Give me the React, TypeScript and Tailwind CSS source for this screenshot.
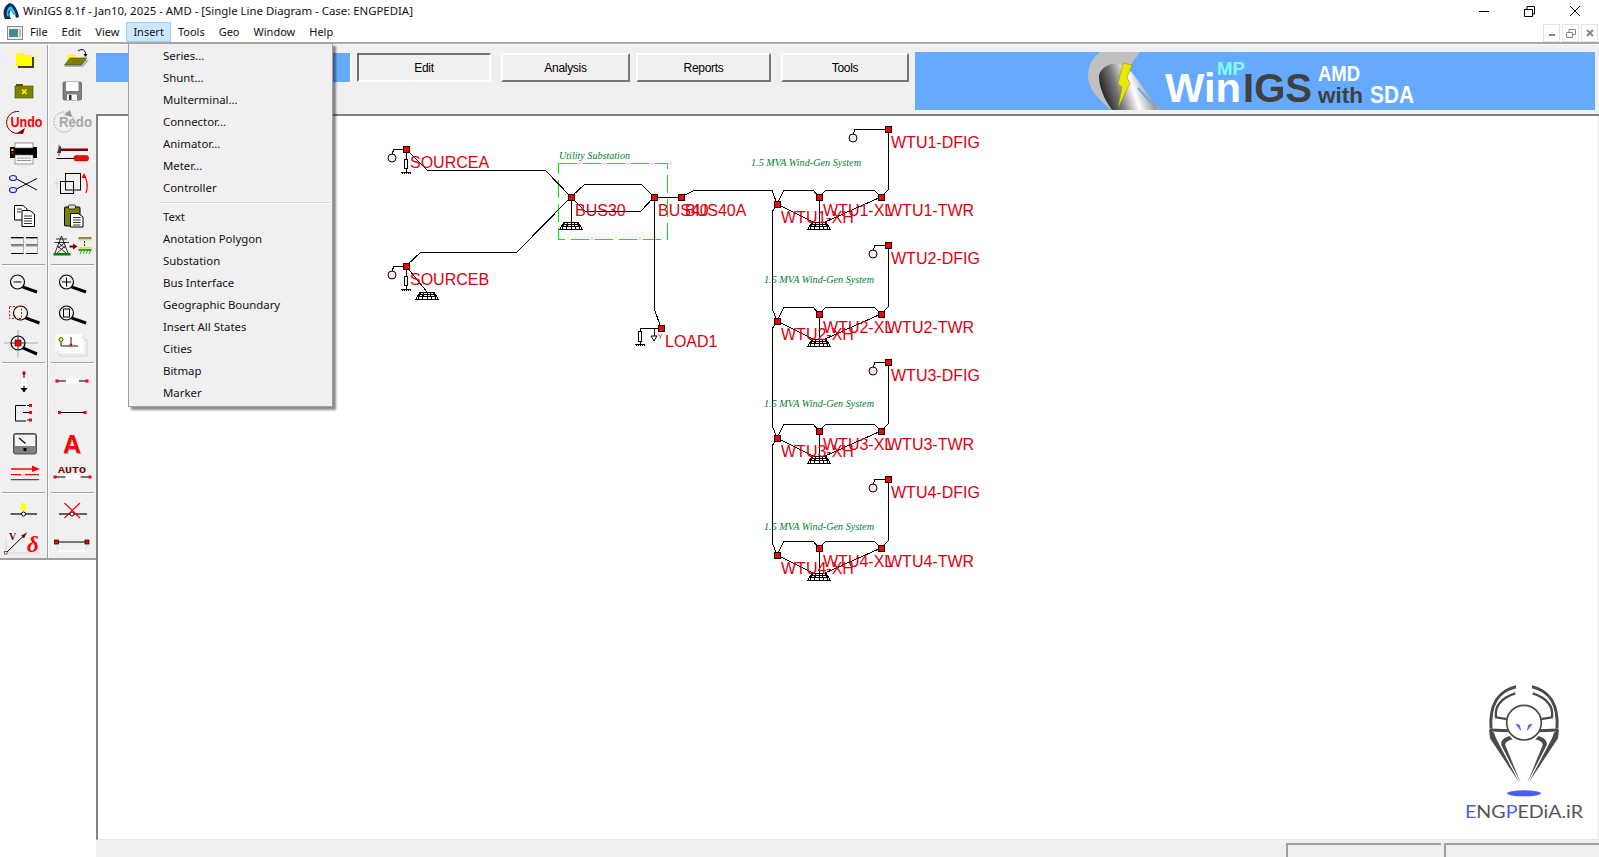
import React from "react";

const SANS = "font-['Noto_Sans',sans-serif]";

const menus = ["File", "Edit", "View", "Insert", "Tools", "Geo", "Window", "Help"];
const insert1 = ["Series...", "Shunt...", "Multerminal...", "Connector...", "Animator...", "Meter...", "Controller"];
const insert2 = ["Text", "Anotation Polygon", "Substation", "Bus Interface", "Geographic Boundary", "Insert All States", "Cities", "Bitmap", "Marker"];

const I = ({ children }: { children: React.ReactNode }) => (
  <svg width="44" height="31" viewBox="0 0 44 31" className="block">{children}</svg>
);

const Mag = ({ cx = 15.5, cy = 15, r = 7, ex = 35, ey = 25, children }: any) => (
  <>
    <line x1={cx + r * 0.7} y1={cy + r * 0.7} x2={ex} y2={ey} stroke="#000" strokeWidth="3" />
    <circle cx={cx} cy={cy} r={r} fill="#f4f4f4" stroke="#000" strokeWidth="1.2" />
    {children}
  </>
);

const Dot = ({ x, y, s = 3 }: any) => <rect x={x - s / 2} y={y - s / 2} width={s} height={s} fill="#f00" />;

const col1: React.ReactNode[][] = [
  [
    <I key="a">
      <g stroke="#ffff50" strokeWidth="1.1"><path d="M7 5 14 10M37 5 31 10M22 3V8M6 14.5H13M31 14.5H38M22 22V27M8 24 14 20M36 24 30 20" /></g>
      <rect x="16" y="12" width="16" height="11" fill="#404020" />
      <rect x="14" y="10" width="16" height="11" fill="#ffff00" />
      <rect x="15" y="8" width="7" height="2" fill="#ffff00" />
    </I>,
    <I key="b">
      <rect x="13" y="10" width="18" height="12" fill="#808000" stroke="#404000" strokeWidth=".6" />
      <rect x="14" y="8" width="7" height="2" fill="#555500" />
      <path d="M20 13.5 24.5 18M24.5 13.5 20 18" stroke="#ffff00" strokeWidth="1.6" />
    </I>,
    <I key="c">
      <path d="M17 4.5A11 11 0 1 0 21 25" fill="none" stroke="#800000" strokeWidth="1" />
      <path d="M15 26 23 21 21 27Z" fill="#800000" />
      <text x="8.5" y="19.5" textLength="32" lengthAdjust="spacingAndGlyphs" fontFamily="Liberation Sans" fontWeight="700" fontSize="14" fill="#f00">Undo</text>
    </I>,
    <I key="d">
      <rect x="8" y="9" width="27" height="11" fill="#000" />
      <rect x="13" y="5" width="18" height="5" fill="#fff" stroke="#666" strokeWidth=".7" />
      <rect x="9.5" y="11" width="2" height="2" fill="#ff0" />
      <rect x="9.5" y="14" width="2" height="2" fill="#f00" />
      <rect x="13" y="17" width="18" height="9" fill="#fff" stroke="#777" strokeWidth=".7" />
      <path d="M15 20H29M15 22.500H29" stroke="#777" strokeWidth=".8" />
    </I>,
    <I key="e">
      <ellipse cx="11" cy="9" rx="3.500" ry="2.500" fill="none" stroke="#1020e0" strokeWidth="1.200" />
      <ellipse cx="11" cy="21" rx="3.500" ry="2.500" fill="none" stroke="#1020e0" strokeWidth="1.200" />
      <path d="M14.500 10 35 21M14.500 20 35 9.500" stroke="#000" strokeWidth="1" />
    </I>,
    <I key="f">
      <path d="M12.500 5.500H21L25 9V20H12.500Z" fill="#fff" stroke="#000" strokeWidth="1" />
      <path d="M20 10.500H28L32.500 14V26.500H20Z" fill="#fff" stroke="#000" strokeWidth="1" />
      <path d="M22 16H30M22 18.500H30M22 21H30M22 23.500H30M15 9H20M15 12H19" stroke="#000" strokeWidth=".8" />
    </I>,
    <I key="g">
      <path d="M9 6.500H21.500M24 6.500H35.500M9 14H21.500M24 14H35.500M9 22.500H21.500M24 22.500H35.500" stroke="#000" strokeWidth="1" />
      <path d="M9 7.500H21.500M24 7.500H35.500M9 15H21.500M24 15H35.500" stroke="#999" strokeWidth="1" />
      <path d="M21.500 7V22M35.500 7V22" stroke="#888" strokeWidth=".6" />
    </I>,
  ],
  [
    <I key="a">
      <Mag><path d="M11.500 15H19.500" stroke="#000" strokeWidth="1" /></Mag>
    </I>,
    <I key="b">
      <Mag cx={18.500} cy={15} r={7} ex={37.500} ey={25} />
      <rect x="7.500" y="8.500" width="12" height="12" fill="none" stroke="#f00" strokeDasharray="2 1.500" strokeWidth="1" />
    </I>,
    <I key="c">
      <path d="M2 14H36M16 1V28" stroke="#999" strokeWidth=".8" />
      <Mag cx={16} cy={14} r={7} ex={35} ey={25}>
        <path d="M16 7V21M9 14H23" stroke="#000" strokeWidth=".8" />
        <rect x="13" y="11" width="6" height="6" fill="#f00" stroke="#000" strokeWidth=".5" />
      </Mag>
    </I>,
  ],
  [
    <I key="a">
      <Dot x={22} y={7} />
      <path d="M22 7V26" stroke="#000" strokeWidth="1" />
      <rect x="19.500" y="12" width="5" height="8" fill="#fff" />
      <path d="M18.500 22H25.500L22 26.500Z" fill="#000" />
    </I>,
    <I key="b">
      <path d="M13.500 8.500H24M13.500 8.500V24H24M21 15.500H27M25 8.500H27M25 23H27" stroke="#000" strokeWidth="1" fill="none" />
      <Dot x={28.500} y={8.500} /><Dot x={28.500} y={15.500} /><Dot x={28.500} y={23} />
    </I>,
    <I key="c">
      <rect x="11.500" y="5.500" width="23" height="20.500" rx="2" fill="#808080" stroke="#333" strokeWidth=".8" />
      <rect x="13" y="7" width="20" height="11" fill="#f4f4f4" />
      <path d="M17 10 23.500 15.500" stroke="#000" strokeWidth="1.100" />
      <rect x="21.500" y="20" width="3" height="3" fill="#000" />
    </I>,
    <I key="d">
      <path d="M9 10H35" stroke="#f00" strokeWidth="1.500" />
      <path d="M30 6.500 38 10 30 13Z" fill="#f00" />
      <path d="M9 15.500H19M23 15.500H37" stroke="#f00" strokeWidth="1" />
      <path d="M9 20.500H37" stroke="#f00" strokeWidth="1" />
      <path d="M9 16.500H37M9 21.500H37" stroke="#bbb" strokeWidth=".8" />
    </I>,
  ],
  [
    <I key="a">
      <path d="M19.500 7H23.500V11H26L21.500 15.500 17 11H19.500Z" fill="#ff0" />
      <path d="M8.500 18H35" stroke="#000" strokeWidth="1.200" />
      <circle cx="21.500" cy="18" r="2" fill="#fff" stroke="#000" strokeWidth="1" />
    </I>,
    <I key="b">
      <path d="M4 26 24.500 6" stroke="#000" strokeWidth="1" />
      <path d="M24.500 6 19 8.500 22 11.500Z" fill="#800000" />
      <path d="M4 26H38M4 26 V12" stroke="#ccc" strokeWidth=".7" fill="none" />
      <rect x="2.500" y="24.500" width="2.500" height="2.500" fill="#fff" stroke="#600" strokeWidth=".6" />
      <text x="7" y="13" fontFamily="Liberation Serif" fontSize="10" fontWeight="700" fill="#600">V</text>
      <text x="25" y="25" fontFamily="Liberation Serif" fontSize="23" fontStyle="italic" fontWeight="700" fill="#f00">δ</text>
    </I>,
  ],
];

const col2: React.ReactNode[][] = [
  [
    <I key="a">
      <path d="M16 10H25V12H33V16H16Z" fill="#ffff00" />
      <path d="M18 15H38L32 22H13Z" fill="#000" opacity=".25" />
      <path d="M19 13H36L30 20H13.500Z" fill="#808000" stroke="#333" strokeWidth=".5" />
      <path d="M27 6C31 3 35 5 34.500 10" fill="none" stroke="#000" strokeWidth="1" />
      <path d="M32.500 9 36.500 9 34.500 12Z" fill="#000" />
    </I>,
    <I key="b">
      <rect x="12" y="6" width="18.500" height="18" rx="1.500" fill="#808080" stroke="#444" strokeWidth=".6" />
      <rect x="15" y="6" width="12.500" height="9" fill="#fff" />
      <rect x="16" y="18.500" width="10" height="5.500" fill="#fff" />
      <rect x="18" y="19" width="2.500" height="5" fill="#333" />
    </I>,
    <I key="c">
      <circle cx="13" cy="15" r="10" fill="none" stroke="#aaa" strokeWidth="1" strokeDasharray="2 1" />
      <path d="M13 8 19 3 21 10Z" fill="#999" />
      <text x="8" y="20" textLength="33" lengthAdjust="spacingAndGlyphs" fontFamily="Liberation Sans" fontWeight="700" fontSize="14" fill="#a8a8a8">Redo</text>
    </I>,
    <I key="d">
      <rect x="8" y="10.500" width="29" height="2.500" fill="#800000" />
      <path d="M8 9 6 15H10V8Z" fill="#333" />
      <path d="M8 7V18" stroke="#555" strokeWidth="1" />
      <path d="M5.500 20.500H24" stroke="#000" strokeWidth="1" />
      <rect x="23" y="17.500" width="14.500" height="5.500" rx="2" fill="#e01010" stroke="#900" strokeWidth=".5" />
    </I>,
    <I key="e">
      <rect x="14.500" y="4.500" width="15" height="16.500" fill="none" stroke="#000" strokeWidth="1" />
      <rect x="9.500" y="12.500" width="13" height="12" fill="none" stroke="#000" strokeWidth="1" />
      <path d="M33 6C37 12 37 18 35 24" fill="none" stroke="#f00" strokeWidth="1.200" />
      <path d="M33 4 30.500 9H35.500Z" fill="#f00" />
      <path d="M6 8V21M3 14H9" stroke="#ccc" strokeWidth=".7" />
    </I>,
    <I key="f">
      <rect x="13.500" y="7" width="15.500" height="19" rx="1" fill="#808000" stroke="#000" strokeWidth="1" />
      <rect x="17.500" y="5" width="7" height="4" rx="1" fill="#ddd" stroke="#000" strokeWidth=".7" />
      <path d="M19.500 13.500H27.500L32 17V27H19.500Z" fill="#fff" stroke="#000" strokeWidth="1" />
      <path d="M22 17.500H29.500M22 20H29.500M22 22.500H29.500M22 25H29.500" stroke="#000" strokeWidth=".8" />
    </I>,
    <I key="g">
      <path d="M5 8H16M3.500 11.500H18M10.500 5 4 22M10.500 5 17 22M6.500 15 15 22M14.500 15 6 22M7 11.500 14 17M14 11.500 7 17" stroke="#000" strokeWidth=".8" fill="none" />
      <rect x="2.500" y="22" width="17" height="2.500" fill="#008000" />
      <path d="M18.500 15.500H23" stroke="#800000" strokeWidth="2" />
      <path d="M22 12.500 26.500 15.500 22 18.500Z" fill="#800000" />
      <path d="M27.500 7H40.500" stroke="#000" strokeWidth="1" />
      <path d="M27.500 8.500H40.500M27.500 17H40.500" stroke="#e0e000" strokeWidth="1.500" />
      <path d="M33.500 10V12M33.500 13V15" stroke="#000" strokeWidth=".8" />
      <path d="M27.500 19H40.500" stroke="#008000" strokeWidth="1.500" />
      <path d="M29 23 30.500 20M32 23 33.500 20M35 23 36.500 20M38 23 39.500 20" stroke="#008000" strokeWidth=".8" />
    </I>,
  ],
  [
    <I key="a">
      <Mag><path d="M11 15H20M15.500 10.500V19.500" stroke="#000" strokeWidth="1" /></Mag>
    </I>,
    <I key="b">
      <Mag><rect x="12.500" y="11" width="6" height="8" fill="none" stroke="#000" strokeWidth="1" /></Mag>
    </I>,
    <I key="c">
      <rect x="9" y="11" width="27" height="16" fill="#f8f8f8" stroke="#bbb" strokeWidth=".6" />
      <rect x="7" y="9" width="27" height="16" fill="#fbfbfb" stroke="#ccc" strokeWidth=".6" />
      <rect x="4.500" y="5" width="26" height="16" fill="#fff" />
      <circle cx="10" cy="10.500" r="2" fill="#ff0" stroke="#000" strokeWidth=".7" />
      <path d="M10 13V17H27M20 8V15" stroke="#000" strokeWidth=".9" fill="none" />
      <Dot x={20} y={16} s={2.500} />
    </I>,
  ],
  [
    <I key="a">
      <path d="M6 15H36" stroke="#000" strokeWidth="1" />
      <rect x="15" y="12.500" width="13" height="5" fill="#fff" />
      <Dot x={6} y={15} /><Dot x={36} y={15} />
    </I>,
    <I key="b">
      <path d="M8.500 15.500H34" stroke="#000" strokeWidth="1" />
      <Dot x={8.500} y={15.500} /><Dot x={34} y={15.500} />
    </I>,
    <I key="c">
      <text x="12.500" y="26" fontFamily="Liberation Sans" fontWeight="700" fontSize="25" fill="#999">A</text>
      <text x="12" y="25" fontFamily="Liberation Sans" fontWeight="700" fontSize="25" fill="#f00">A</text>
    </I>,
    <I key="d">
      <text x="7" y="13.500" textLength="28" lengthAdjust="spacingAndGlyphs" fontFamily="Liberation Mono" fontWeight="700" fontSize="9" fill="#800000">AUTO</text>
      <path d="M4 18H39" stroke="#000" strokeWidth="1" />
      <rect x="14.500" y="15.500" width="15" height="5" fill="#fff" />
      <Dot x={4} y={18} /><Dot x={39} y={18} />
    </I>,
  ],
  [
    <I key="a">
      <path d="M8 18H36" stroke="#000" strokeWidth="1.200" />
      <circle cx="21" cy="18" r="2" fill="#fff" stroke="#000" strokeWidth="1" />
      <path d="M13.500 7 29 22M29 7 13.500 22" stroke="#f00" strokeWidth="1.200" />
    </I>,
    <I key="b">
      <path d="M5.500 15H36" stroke="#000" strokeWidth="1" />
      <rect x="3.500" y="13" width="4" height="4" fill="#f00" stroke="#000" strokeWidth=".7" />
      <rect x="34" y="13" width="4" height="4" fill="#f00" stroke="#000" strokeWidth=".7" />
      <path d="M8 24H34M8 24 11 22M8 24 11 26M34 24 31 22M34 24 31 26" stroke="#fff" strokeWidth="1" />
      <path d="M5 18 8 23M37 18 34 23" stroke="#ccc" strokeWidth=".6" />
    </I>,
  ],
];

const Row = ({ a, b }: { a: React.ReactNode; b: React.ReactNode }) => (
  <div className="flex h-[31px]">
    <div className="flex w-[47px] items-center justify-center">{a}</div>
    <div className="w-[2px] bg-[#a0a0a0] border-r border-white" />
    <div className="flex w-[47px] items-center justify-center">{b}</div>
  </div>
);

const Divider = ({ h }: { h: string }) => (
  <div className={`flex ${h} items-center`}>
    <div className="flex w-[47px] items-center justify-center self-stretch">
      <div className="h-[2px] w-[43px] border-b border-white bg-[#a0a0a0]" />
    </div>
    <div className="w-[2px] self-stretch bg-[#a0a0a0] border-r border-white" />
    <div className="flex w-[47px] items-center justify-center self-stretch">
      <div className="h-[2px] w-[43px] border-b border-white bg-[#a0a0a0]" />
    </div>
  </div>
);

const Toolbar = () => (
  <div className="w-[96px] bg-white">
    <div className="border-b-2 border-[#a0a0a0] bg-[#f0f0f0]">
      {col1.map((g, gi) => (
        <React.Fragment key={gi}>
          {g.map((n, i) => <Row key={i} a={n} b={col2[gi][i]} />)}
          {gi < 3 && <Divider h={gi === 0 ? "h-[5px]" : "h-[6px]"} />}
        </React.Fragment>
      ))}
    </div>
  </div>
);

const ToolBtn = ({ label, w, sunken }: { label: string; w: string; sunken?: boolean }) => (
  <div
    className={`flex h-[29px] items-center justify-center text-[12px] tracking-[-0.3px] text-black font-['Liberation_Sans',sans-serif] ${w} ${
      sunken
        ? "border-[2px] border-t-[#6e6e6e] border-l-[#6e6e6e] border-r-white border-b-white"
        : "border-[2px] border-t-white border-l-white border-r-[#777777] border-b-[#777777]"
    }`}
  >
    {label}
  </div>
);

const Banner = () => (
  <svg width="680" height="58" viewBox="915 52 680 58" className="block bg-[#66aaff]">
    <defs>
      <linearGradient id="cyl" gradientUnits="userSpaceOnUse" x1="1097" y1="92" x2="1158" y2="72">
        <stop offset="0" stopColor="#0c0c0c" />
        <stop offset="0.3" stopColor="#777" />
        <stop offset="0.55" stopColor="#fff" />
        <stop offset="0.78" stopColor="#999" />
        <stop offset="1" stopColor="#eee" />
      </linearGradient>
    </defs>
    <path d="M1140 52C1130 66 1125 72 1124 80L1112 110C1098 100 1088 88 1088 76C1088 66 1092 58 1100 52Z" fill="#c0c0c0" />
    <path d="M1099 78C1098 70 1108 62 1118 64C1124 65 1129 69 1133 74L1160 110H1112C1105 100 1100 90 1099 78Z" fill="url(#cyl)" />
    <path d="M1138 88 1150 102H1160" fill="none" stroke="#66aaff" strokeWidth="2" />
    <path d="M1123 63 1132 65 1127 78 1130 83 1118 108 1122 87 1118 84Z" fill="#e8e800" stroke="#888800" strokeWidth=".5" />
    <g fontFamily="Liberation Sans" fontWeight="700">
      <text x="1165" y="102" textLength="76" lengthAdjust="spacingAndGlyphs" fontSize="40" fill="#fff">Win</text>
      <text x="1243" y="102" textLength="69" lengthAdjust="spacingAndGlyphs" fontSize="40" fill="#404040">IGS</text>
      <text x="1217" y="75" textLength="28" lengthAdjust="spacingAndGlyphs" fontSize="18" fill="#80ffff">MP</text>
      <text x="1318" y="81" textLength="42" lengthAdjust="spacingAndGlyphs" fontSize="22" fill="#fff">AMD</text>
      <text x="1318" y="103" textLength="45" lengthAdjust="spacingAndGlyphs" fontSize="22" fill="#404040">with</text>
      <text x="1370" y="103" textLength="44" lengthAdjust="spacingAndGlyphs" fontSize="23" fill="#fff">SDA</text>
    </g>
  </svg>
);

const Bus = ({ x, y }: { x: number; y: number }) => (
  <rect x={x - 3} y={y - 3} width="6" height="6" fill="#f00" stroke="#000" strokeWidth="1" shapeRendering="crispEdges" />
);
const Hatch = ({ x, y }: { x: number; y: number }) => (
  <g shapeRendering="crispEdges">
    <path d={`M${x - 7} ${y}H${x + 7}L${x + 11} ${y + 7}H${x - 11}Z`} fill="#fff" stroke="#000" strokeWidth="1" />
    <path d={`M${x - 8} ${y + 2}H${x + 8}M${x - 10} ${y + 4}H${x + 10}M${x - 3} ${y}L${x - 5} ${y + 7}M${x + 3} ${y}L${x + 5} ${y + 7}M${x} ${y}V${y + 7}M${x - 6} ${y}L${x - 9} ${y + 7}M${x + 6} ${y}L${x + 9} ${y + 7}`} stroke="#000" strokeWidth="1" fill="none" />
  </g>
);
const SmallGround = ({ x, y }: { x: number; y: number }) => (
  <path d={`M${x - 5} ${y}H${x + 5}M${x - 4} ${y}v2M${x - 2} ${y}v2M${x} ${y}v2M${x + 2} ${y}v2M${x + 4} ${y}v2`} stroke="#000" strokeWidth="1" fill="none" shapeRendering="crispEdges" />
);
const Gen = ({ x, y }: { x: number; y: number }) => (
  <circle cx={x} cy={y} r="4" fill="#ffe8e4" stroke="#000" strokeWidth="1" />
);
const Res = ({ x, y, h = 9 }: { x: number; y: number; h?: number }) => (
  <rect x={x - 1.5} y={y} width="3" height={h} fill="#fff8f0" stroke="#000" strokeWidth="1" shapeRendering="crispEdges" />
);
const L = ({ x, y, children }: { x: number; y: number; children: string }) => (
  <text x={x} y={y} fontFamily="Liberation Sans" fontSize="16" fill="#dd0010">{children}</text>
);
const Note = ({ x, y, w, children }: { x: number; y: number; w: number; children: string }) => (
  <text x={x} y={y} textLength={w} lengthAdjust="spacingAndGlyphs" fontFamily="Liberation Serif" fontStyle="italic" fontSize="10" fill="#008030">{children}</text>
);

const units = [
  { dy: 0, d: 0, gx: 853, bus: 129 },
  { dy: 117, d: 116, gx: 873, bus: 245 },
  { dy: 234, d: 233, gx: 873, bus: 362 },
  { dy: 351, d: 350, gx: 873, bus: 479 },
];

const Spider = () => (
  <g transform="translate(1440 670) scale(.3333)">
    {[0, 1].map((m) => (
      <g key={m} transform={m ? "translate(504 0) scale(-1 1)" : undefined}>
        <g fill="none" stroke="#4a4a4a">
          <path d="M228 50C175 62 148 105 153 176" strokeWidth="9" />
          <path d="M226 70C190 82 163 105 168 142L205 148" strokeWidth="7" />
          <path d="M150 180 205 182" strokeWidth="9" />
        </g>
        <path d="M147 178 150 205 238 338 168 205 162 188Z" fill="#4a4a4a" />
        <path d="M208 198C190 204 181 214 184 226L242 338 196 226C195 216 205 212 218 208Z" fill="#4a4a4a" />
      </g>
    ))}
    <circle cx="252" cy="158" r="52" fill="#fff" stroke="#4a4a4a" strokeWidth="5" />
    <path d="M228 163 242 181 238 165ZM276 163 262 181 266 165Z" fill="#4a5cff" stroke="#4a5cff" strokeWidth="2" />
    <ellipse cx="252" cy="370" rx="51" ry="9" fill="#4a5cff" />
  </g>
);

const Diagram = () => (
  <svg width="1500" height="723" viewBox="98 116 1500 723" className="block">
    <rect x="558.500" y="163.500" width="109" height="76" fill="none" stroke="#00f000" strokeWidth="1" strokeDasharray="18 6" shapeRendering="crispEdges" />
    <Note x={559} y={159} w={71}>Utility Substation</Note>
    <g fill="none" stroke="#000" strokeWidth="1" shapeRendering="crispEdges">
      <path d="M406 149 427 170H545L571 197" />
      <path d="M406 266 421 252H517L571 197" />
      <path d="M406 266 427 292" />
      <path d="M406 149V159M406 168V172M406 266V276M406 286V289" />
      <path d="M403 149H394L392 154M403 266H394L392 271" />
      <path d="M571 197 585 184H641L654 197" />
      <path d="M571 197 585 211H641L654 197" />
      <path d="M571 197V222" />
      <path d="M654 197H681L695 190H772L777 204" />
      <path d="M654 197V308L661 328" />
      <path d="M661 328H640V331M640 341V344M654 328V336" />
    </g>
    <Gen x={392} y={158} /><Gen x={392} y={275} />
    <Res x={406} y={159} /><Res x={406} y={276} /><Res x={640} y={331} h={10} />
    <SmallGround x={406} y={172} /><SmallGround x={406} y={289} /><SmallGround x={640} y={344} />
    <Hatch x={427} y={292} /><Hatch x={571} y={222} />
    <path d="M651 336H657L654 341Z" fill="#fff" stroke="#000" strokeWidth="1" />
    <text x="658" y="339" fontFamily="Liberation Sans" fontSize="7" fill="#f00">Y</text>
    {units.map((u, i) => {
      const y = (v: number) => v + u.dy;
      return (
        <g key={i}>
          <g fill="none" stroke="#000" strokeWidth="1" shapeRendering="crispEdges">
            <path d={`M777 ${y(204)}L784 ${y(190)}H813L819 ${y(197)}L826 ${y(190)}H874L881 ${y(197)}L888 ${y(190)}V${u.bus}H${u.gx + 2}L${u.gx} ${u.bus + 6}`} />
            <path d={`M819 ${y(197)}V${y(222)}M777 ${y(204)}L813 ${y(222)}M881 ${y(197)}L825 ${y(222)}`} />
            {i < 3 && <path d={`M777 ${y(204)}L772 ${y(212)}V${y(308)}L777 ${y(321)}`} />}
          </g>
          <Gen x={u.gx} y={u.bus + 9} />
          <Hatch x={819} y={y(222)} />
          <Bus x={777} y={y(204)} /><Bus x={819} y={y(197)} /><Bus x={881} y={y(197)} /><Bus x={888} y={u.bus} />
          <L x={781} y={y(223)}>{`WTU${i + 1}-XH`}</L>
          <L x={823} y={y(216)}>{`WTU${i + 1}-XL`}</L>
          <L x={887} y={y(216)}>{`WTU${i + 1}-TWR`}</L>
          <L x={891} y={148 + u.d}>{`WTU${i + 1}-DFIG`}</L>
        </g>
      );
    })}
    {[[751, 166], [764, 283], [764, 407], [764, 530]].map(([x, yy]) => (
      <Note key={yy} x={x} y={yy} w={110}>1.5 MVA Wind-Gen System</Note>
    ))}
    <Bus x={406} y={149} /><Bus x={406} y={266} /><Bus x={571} y={197} /><Bus x={654} y={197} /><Bus x={681} y={197} /><Bus x={661} y={328} />
    <L x={410} y={168}>SOURCEA</L>
    <L x={410} y={285}>SOURCEB</L>
    <L x={575} y={216}>BUS30</L>
    <L x={658} y={216}>BUS40</L>
    <L x={685} y={216}>BUS40A</L>
    <L x={665} y={347}>LOAD1</L>
    <Spider />
    <text x="1465" y="818" textLength="118" lengthAdjust="spacingAndGlyphs" fontFamily="Lato" fontSize="18" fontWeight="400" fill="#555">
      <tspan fill="#4a5cff">E</tspan>NG<tspan fill="#4a5cff">P</tspan>EDiA.iR
    </text>
  </svg>
);

const MdiBtn = ({ children }: { children: React.ReactNode }) => (
  <div className="flex h-[18px] w-[17px] items-center justify-center border border-[#e4e4e4]">{children}</div>
);

export default function App() {
  return (
    <div className={`relative flex h-[857px] w-[1599px] flex-col overflow-hidden bg-white ${SANS}`}>
      <div className="flex h-[22px] items-center">
        <svg width="18" height="18" viewBox="0 0 18 18" className="ml-[2px]">
          <path d="M3 17C0 11 2 3 8 1C13 2 16 9 17 15L14 16C13 11 11 8 9 8C7 10 7 14 9 17Z" fill="#0a2a5a" />
          <path d="M5 14C4 9 6 5 9 4C11 6 13 9 14 13L11 13C10 10 9 8 8 8C6 9 6 11 7 15Z" fill="#29c5e6" />
        </svg>
        <span className="ml-[3px] whitespace-nowrap text-[11.4px] text-[#111]">WinIGS 8.1f - Jan10, 2025 - AMD - [Single Line Diagram - Case: ENGPEDIA]</span>
        <div className="ml-auto flex items-center">
          <svg width="139" height="20" viewBox="1460 0 139 20">
            <path d="M1479 10.500H1489" stroke="#000" />
            <path d="M1524.500 8.500H1532.500V15.500H1524.500ZM1527 8.500V5.500H1534.500V13H1532.500" fill="none" stroke="#000" />
            <path d="M1570 5 1580 15M1580 5 1570 15" stroke="#000" />
          </svg>
        </div>
      </div>
      <div className="flex h-[20px] items-stretch">
        <svg width="16" height="14" viewBox="0 0 16 14" className="ml-[7px] mt-[4px]">
          <rect x=".5" y=".5" width="15" height="13" fill="#eee" stroke="#888" />
          <rect x="2" y="3" width="9" height="8" fill="#4a8a8a" />
          <rect x="12" y="3" width="2" height="8" fill="#bbb" />
        </svg>
        <div className="flex items-stretch text-[11px] text-[#111]">
          {menus.map((m) => (
            <div key={m} className={`flex items-center px-[6px] ${m === "Insert" ? "border border-[#99d1ff] bg-[#cce8ff]" : "border border-transparent"}`}>{m}</div>
          ))}
        </div>
        <div className="ml-auto mt-[2px] flex gap-[2px] pr-[1px]">
          <MdiBtn><div className="mt-[3px] h-[2px] w-[6px] bg-[#7a8a9a]" /></MdiBtn>
          <MdiBtn>
            <svg width="10" height="9" viewBox="0 0 10 9"><path d="M.5 3.500H6.500V8.500H.5ZM3 3V.5H9.500V5.500H7" fill="none" stroke="#7a8a9a" /></svg>
          </MdiBtn>
          <MdiBtn>
            <svg width="8" height="8" viewBox="0 0 8 8"><path d="M1 1 7 7M7 1 1 7" stroke="#7a8a9a" strokeWidth="2" /></svg>
          </MdiBtn>
        </div>
      </div>
      <div className="h-[3px] border-t-2 border-[#a8a8a8] bg-white" />
      <div className="flex flex-1">
        <Toolbar />
        <div className="flex w-[1503px] flex-col">
          <div className="flex h-[71px] border-b-2 border-[#808080] bg-[#f0f0f0] pt-[7px]">
            <div className="mt-[1px] h-[29px] w-[256px] border-r-2 border-white bg-[#66aaff]" />
            <div className="ml-[5px] mt-[1px] flex">
              <ToolBtn label="Edit" w="w-[134px]" sunken />
              <div className="w-[10px]" />
              <ToolBtn label="Analysis" w="w-[129px]" />
              <div className="w-[6px]" />
              <ToolBtn label="Reports" w="w-[135px]" />
              <div className="w-[10px]" />
              <ToolBtn label="Tools" w="w-[128px]" />
            </div>
            <div className="ml-[6px]"><Banner /></div>
          </div>
          <div className="flex-1 border-l-2 border-r border-b border-l-[#808080] border-r-[#e6e6e6] border-b-[#e6e6e6]">
            <Diagram />
          </div>
          <div className="flex h-[17px] justify-end gap-[3px] bg-[#f0f0f0] pt-[3px]">
            <div className="w-[155px] border-l-2 border-t-2 border-[#a0a0a0]" />
            <div className="w-[155px] border-l-2 border-t-2 border-[#a0a0a0]" />
          </div>
        </div>
      </div>

      <div className="absolute left-[128px] top-[43px] h-[364px] w-[205px] border border-[#a0a0a0] bg-[#f0f0f0] pt-[1px] text-[11.4px] text-[#111] shadow-[3px_3px_2px_rgba(0,0,0,0.45)]">
        {insert1.map((t) => <div key={t} className="flex h-[22px] items-center pl-[34px]">{t}</div>)}
        <div className="mb-[2px] ml-[30px] mr-[2px] mt-[3px] h-[2px] border-b border-white bg-[#d4d4d4]" />
        {insert2.map((t) => <div key={t} className="flex h-[22px] items-center pl-[34px]">{t}</div>)}
      </div>
    </div>
  );
}
